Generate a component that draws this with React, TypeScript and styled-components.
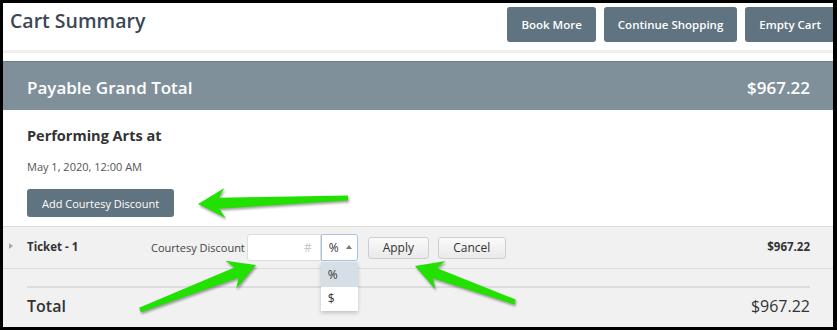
import React from 'react';
import styled, { createGlobalStyle } from 'styled-components';

const GlobalStyle = createGlobalStyle`
  html, body {
    margin: 0;
    padding: 0;
    background: #000;
  }
  body {
    font-family: 'Open Sans', 'Liberation Sans', sans-serif;
  }
  * {
    box-sizing: border-box;
  }
`;

const Shot = styled.div`
  position: relative;
  width: 837px;
  height: 330px;
  padding: 3px 4px 3px 3px;
  background: #000;
`;

const Page = styled.div`
  width: 100%;
  height: 100%;
  background: #fff;
  overflow: hidden;
  display: flex;
  flex-direction: column;
`;

const Header = styled.div`
  display: flex;
  justify-content: space-between;
  align-items: flex-start;
  height: 50px;
  padding: 4px 0 0 7px;
  margin-right: -2px;
  border-bottom: 3px solid #efefef;
  flex-shrink: 0;
`;

const Title = styled.h1`
  margin: 0;
  font-size: 19.5px;
  font-weight: 600;
  line-height: 27px;
  color: #3a4853;
`;

const HeaderActions = styled.div`
  display: flex;
  gap: 8px;
`;

const DarkButton = styled.button<{ $small?: boolean }>`
  height: ${p => (p.$small ? '28px' : '35px')};
  padding: 0 ${p => (p.$small ? '15px' : '14px')};
  background: #5f7380;
  border: none;
  border-radius: 3px;
  color: #fff;
  font-family: inherit;
  font-size: ${p => (p.$small ? '11px' : '11.5px')};
  font-weight: ${p => (p.$small ? 400 : 600)};
  cursor: pointer;
  white-space: nowrap;
`;

const GrandTotal = styled.div`
  margin-top: 8px;
  height: 49px;
  flex-shrink: 0;
  display: flex;
  align-items: center;
  justify-content: space-between;
  padding: 2px 23px 0 24px;
  background: #7f909b;
  border-top: 1px solid #6d7e89;
  color: #fff;
  font-size: 17px;
  font-weight: 600;
`;

const Event = styled.div`
  padding: 0 24px;
  flex-shrink: 0;
`;

const EventTitle = styled.h2`
  margin: 16px 0 0;
  font-size: 14.5px;
  font-weight: 700;
  line-height: 20px;
  color: #333;
`;

const EventDate = styled.div`
  margin-top: 13px;
  font-size: 11px;
  line-height: 15px;
  color: #555;
`;

const DiscountTrigger = styled(DarkButton)`
  margin: 15px 0 9px;
  display: block;
`;

const TicketRow = styled.div`
  height: 43px;
  flex-shrink: 0;
  display: flex;
  align-items: center;
  padding: 0 23px 0 6px;
  background: #f1f1f1;
  border-top: 1px solid #dcdcdc;
  border-bottom: 1px solid #dcdcdc;
`;

const Caret = styled.span`
  width: 0;
  height: 0;
  margin-top: -3px;
  border-top: 3px solid transparent;
  border-bottom: 3px solid transparent;
  border-left: 4px solid #a8a8a8;
`;

const TicketName = styled.span`
  width: 124px;
  margin: -3px 0 0 14px;
  font-size: 11.5px;
  font-weight: 700;
  color: #333;
`;

const DiscountLabel = styled.label`
  margin-right: 2px;
  font-size: 11px;
  color: #444;
`;

const AmountInput = styled.input`
  width: 74px;
  height: 27px;
  padding: 0 8px;
  border: 1px solid #dedede;
  border-radius: 3px 0 0 3px;
  background: #fff;
  font-family: inherit;
  font-size: 12px;
  text-align: right;
  outline: none;

  &::placeholder {
    color: #c8c8c8;
  }
`;

const UnitSelect = styled.div`
  position: relative;
  width: 37px;
  height: 27px;
  display: flex;
  align-items: center;
  justify-content: space-between;
  padding: 0 5px 0 7px;
  margin-right: 10px;
  background: #fff;
  border: 1px solid #a6c4e0;
  border-radius: 0 3px 3px 0;
  font-size: 12px;
  color: #333;
`;

const UpCaret = styled.span`
  width: 0;
  height: 0;
  margin-top: -2px;
  border-left: 3px solid transparent;
  border-right: 3px solid transparent;
  border-bottom: 4px solid #777;
`;

const UnitMenu = styled.ul`
  position: absolute;
  top: 27px;
  left: -1px;
  width: 37px;
  margin: 0;
  padding: 0;
  list-style: none;
  background: #fff;
  box-shadow: 0 2px 4px rgba(0, 0, 0, 0.2);
  z-index: 2;
`;

const UnitOption = styled.li<{ $active?: boolean }>`
  height: 24.5px;
  display: flex;
  align-items: center;
  padding-left: 7px;
  background: ${p => (p.$active ? '#d5dfe5' : '#fff')};
  font-size: 12px;
  color: #333;
`;

const LightButton = styled.button<{ $width: number }>`
  width: ${p => p.$width}px;
  height: 22px;
  margin-right: 9px;
  background: linear-gradient(#fafafa, #e9e9e9);
  border: 1px solid #cfcfcf;
  border-radius: 3px;
  font-family: inherit;
  font-size: 12px;
  color: #333;
  cursor: pointer;
`;

const RowPrice = styled.span`
  margin: -3px 0 0 auto;
  font-size: 11.5px;
  font-weight: 700;
  color: #333;
`;

const TotalSection = styled.div`
  flex: 1;
  padding: 17px 23px 0 24px;
  background: #f1f1f1;
`;

const TotalLine = styled.div`
  display: flex;
  justify-content: space-between;
  padding-top: 7px;
  border-top: 2px solid #dcdcdc;
  font-size: 16px;
  line-height: 22px;
  color: #333;
`;

const TotalLabel = styled.span`
  font-weight: 600;
`;

const Overlay = styled.svg`
  position: absolute;
  left: 0;
  top: 0;
  pointer-events: none;
  filter: drop-shadow(1px 2px 1px rgba(0, 0, 0, 0.35));
`;

type Pt = [number, number];

const arrowPoints = (tip: Pt, tail: Pt, headLen = 27, headHalf = 15, neckHalf = 5.5, tailHalf = 2.5) => {
  const dx = tail[0] - tip[0];
  const dy = tail[1] - tip[1];
  const len = Math.hypot(dx, dy);
  const ux = dx / len;
  const uy = dy / len;
  const nx = -uy;
  const ny = ux;
  const at = (d: number, s: number): Pt => [tip[0] + ux * d + nx * s, tip[1] + uy * d + ny * s];
  const pts: Pt[] = [
    tip,
    at(headLen, headHalf),
    at(headLen - 6, neckHalf),
    at(len, tailHalf),
    at(len, -tailHalf),
    at(headLen - 6, -neckHalf),
    at(headLen, -headHalf),
  ];
  return pts.map(p => p.map(v => v.toFixed(1)).join(',')).join(' ');
};

const arrows: { tip: Pt; tail: Pt }[] = [
  { tip: [198, 204], tail: [348, 198] },
  { tip: [256, 265], tail: [140, 310] },
  { tip: [415, 266], tail: [515, 302] },
];

const App: React.FC = () => {
  return (
    <>
      <GlobalStyle />
      <Shot>
        <Page>
          <Header>
            <Title>Cart Summary</Title>
            <HeaderActions>
              <DarkButton>Book More</DarkButton>
              <DarkButton>Continue Shopping</DarkButton>
              <DarkButton>Empty Cart</DarkButton>
            </HeaderActions>
          </Header>

          <GrandTotal>
            <span>Payable Grand Total</span>
            <span>$967.22</span>
          </GrandTotal>

          <Event>
            <EventTitle>Performing Arts at</EventTitle>
            <EventDate>May 1, 2020, 12:00 AM</EventDate>
            <DiscountTrigger $small>Add Courtesy Discount</DiscountTrigger>
          </Event>

          <TicketRow>
            <Caret />
            <TicketName>Ticket - 1</TicketName>
            <DiscountLabel>Courtesy Discount</DiscountLabel>
            <AmountInput placeholder="#" />
            <UnitSelect>
              <span>%</span>
              <UpCaret />
              <UnitMenu>
                <UnitOption $active>%</UnitOption>
                <UnitOption>$</UnitOption>
              </UnitMenu>
            </UnitSelect>
            <LightButton $width={61}>Apply</LightButton>
            <LightButton $width={68}>Cancel</LightButton>
            <RowPrice>$967.22</RowPrice>
          </TicketRow>

          <TotalSection>
            <TotalLine>
              <TotalLabel>Total</TotalLabel>
              <span>$967.22</span>
            </TotalLine>
          </TotalSection>
        </Page>

        <Overlay width={837} height={330} viewBox="0 0 837 330">
          {arrows.map((a, i) => (
            <polygon key={i} points={arrowPoints(a.tip, a.tail)} fill="#22e000" strokeLinejoin="round" />
          ))}
        </Overlay>
      </Shot>
    </>
  );
};

export default App;
